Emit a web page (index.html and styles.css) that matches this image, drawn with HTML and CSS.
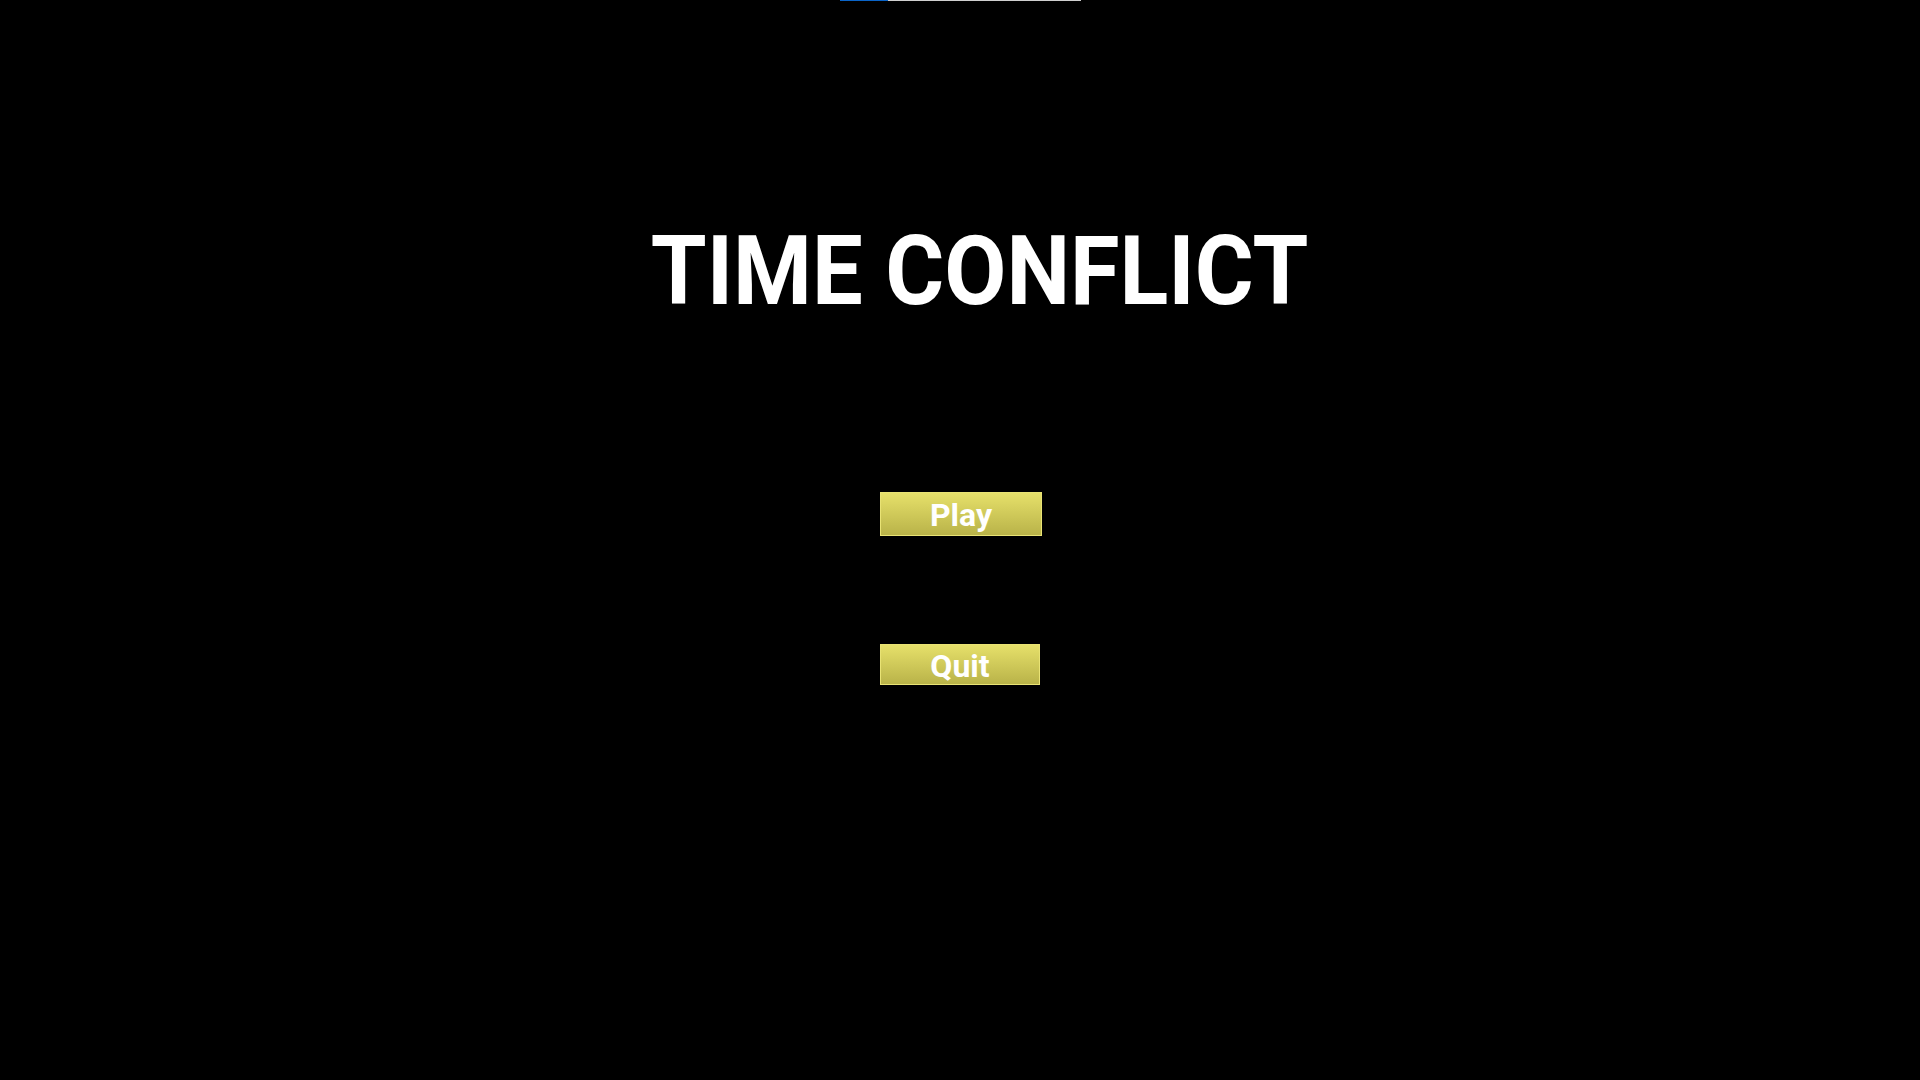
FILE: index.html
```html
<!DOCTYPE html>
<html lang="en">
<head>
  <meta charset="UTF-8">
  <title>Time Conflict</title>
  <link rel="stylesheet" href="styles.css">
</head>
<body>
<div class="loader">
  <div class="loader-fill"></div>
</div>

<div class="menu">
  <h1 class="title">TIME CONFLICT</h1>
  <button class="btn btn-play">Play</button>
  <button class="btn btn-quit">Quit</button>
</div>
</body>
</html>
```

FILE: styles.css
```css
html, body {
  margin: 0;
  height: 100%;
  background: #000;
  font-family: Roboto, "Liberation Sans", sans-serif;
  overflow: hidden;
}

/* loading bar across the top */
.loader {
  width: 241px;
  height: 1px;
  margin: 0 auto 0 840px;
  background: #d0d0d0;
}

.loader-fill {
  width: 48px;
  height: 100%;
  background: #0a64c8;
}

.menu {
  display: flex;
  flex-direction: column;
  align-items: center;
}

/* the title font is a bit narrower than plain Roboto Bold */
.title {
  margin: 222px 0 0 39px;
  color: #fff;
  font-size: 97px;
  font-weight: 700;
  line-height: 1;
  transform: scaleX(0.93);
}

.btn {
  display: block;
  padding: 1px 0 0;
  border: 1px solid #e9e375;
  background: linear-gradient(to bottom, #e6e06a, #b9b349);
  color: #fff;
  font-family: inherit;
  font-size: 32px;
  font-weight: 700;
  line-height: 1;
}

.btn-play {
  width: 162px;
  height: 44px;
  margin: 172px 0 0 2px;
}

.btn-quit {
  width: 160px;
  height: 41px;
  margin-top: 108px;
  padding-top: 3px;
}
```
